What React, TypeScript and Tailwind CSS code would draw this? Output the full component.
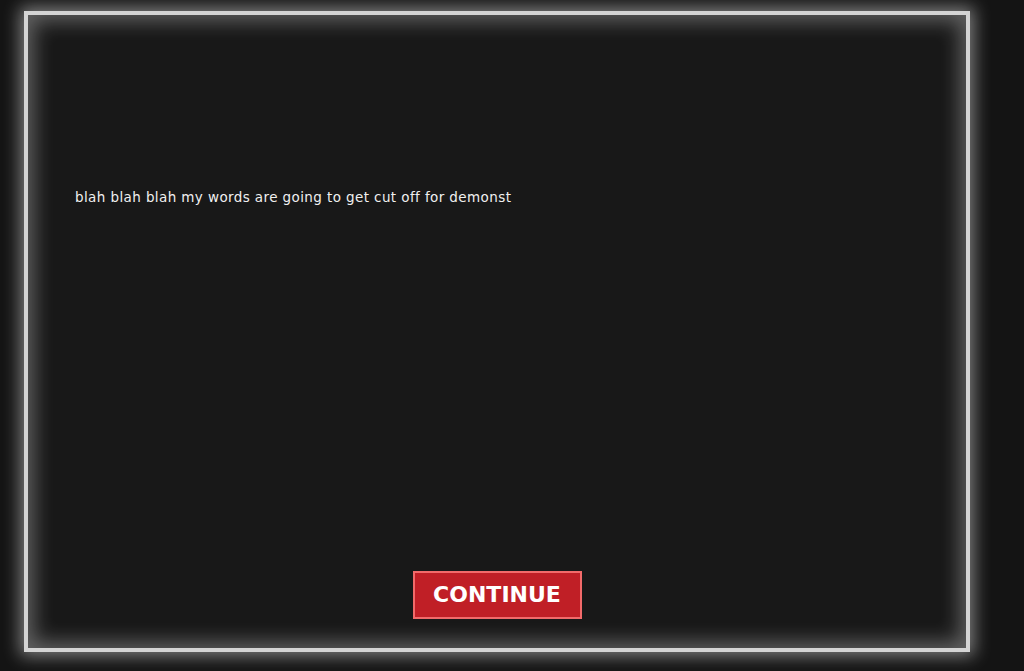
import React from "react";

export default function App() {
  return (
    <div className="w-[1024px] h-[671px] bg-[#141414] overflow-hidden pt-[11px] pl-[24px]" style={{ fontFamily: '"DejaVu Sans", sans-serif' }}>
      <div className="w-[946px] h-[641px] border-[4px] border-[#d4d4d4] bg-[#181818] shadow-[0_0_16px_4px_rgba(255,255,255,0.45),inset_0_0_20px_6px_rgba(255,255,255,0.32)] flex flex-col">
        <div className="pl-[47px] pt-[172px] text-[13.5px] leading-[20px] text-[#f0f0f0] tracking-[0.4px]">
          blah blah blah my words are going to get cut off for demonst
        </div>
        <div className="flex-1" />
        <div className="flex justify-center pb-[29px]">
          <button className="w-[169px] h-[48px] bg-[#c01f26] border-[2px] border-[#f26a6a] text-white text-[22px] font-bold leading-none tracking-[0px]">
            CONTINUE
          </button>
        </div>
      </div>
    </div>
  );
}
